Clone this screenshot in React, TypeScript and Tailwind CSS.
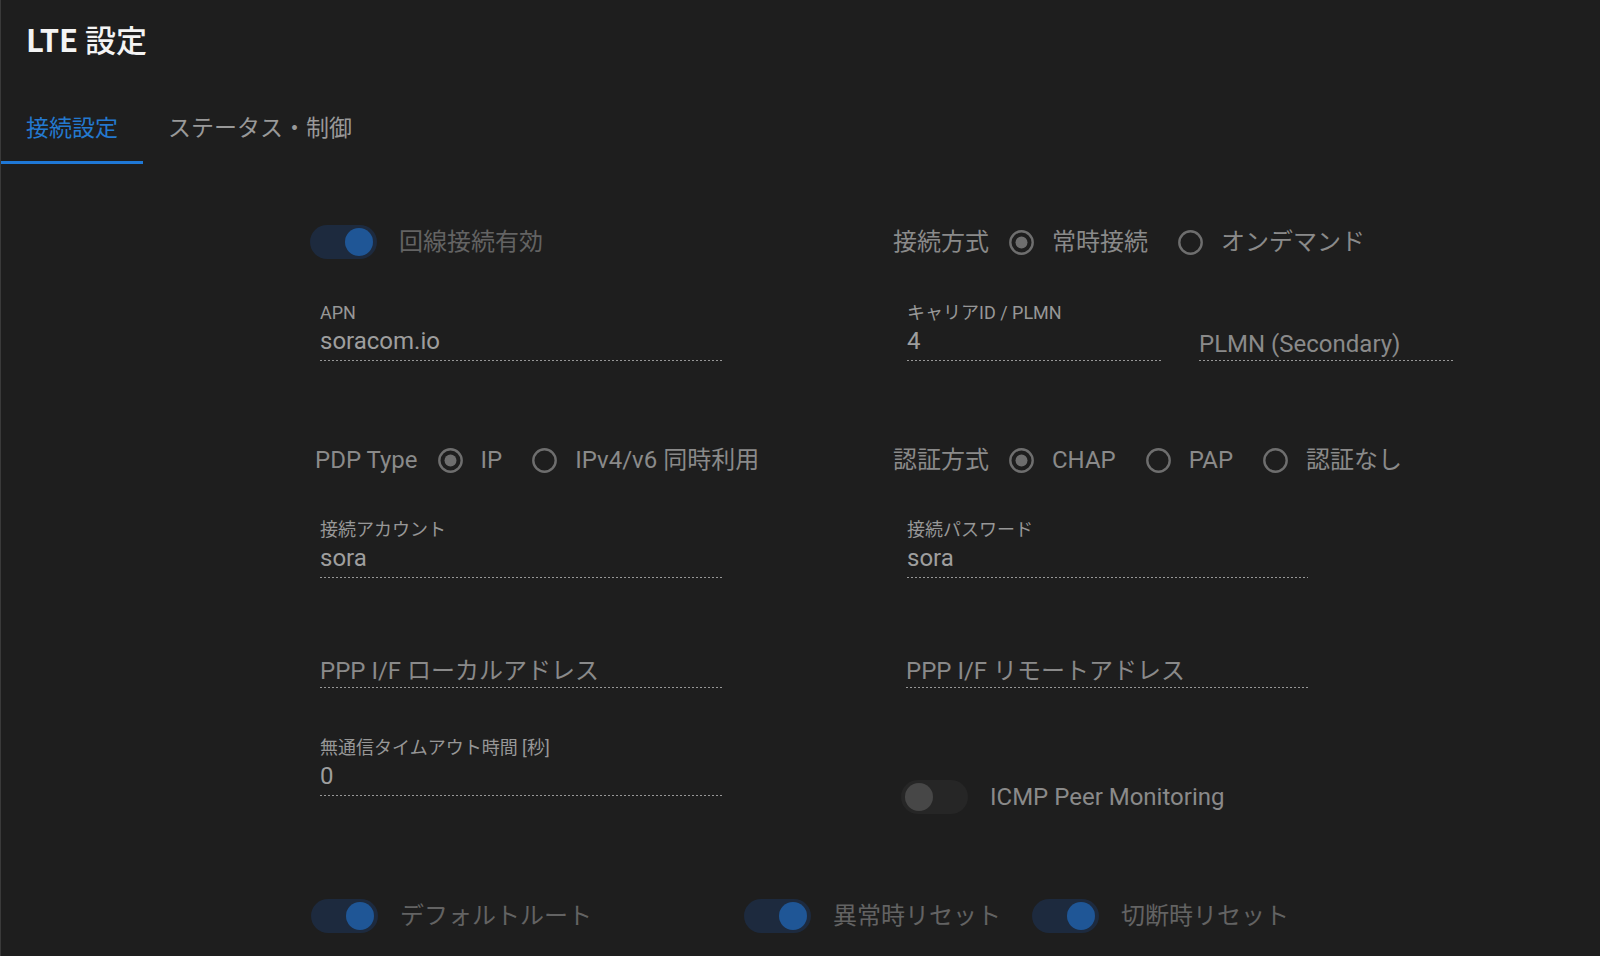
import React from "react";

function Toggle({ on }: { on: boolean }) {
  return (
    <div
      className={
        on
          ? "flex h-[34px] w-[67px] shrink-0 items-center justify-end rounded-full bg-[#1d2a3e] px-[4px]"
          : "flex h-[34px] w-[67px] shrink-0 items-center justify-start rounded-full bg-[#262626] px-[4px]"
      }
    >
      <div
        className={
          on
            ? "h-[28px] w-[28px] rounded-full bg-[#1f5696]"
            : "h-[28px] w-[28px] rounded-full bg-[#474747]"
        }
      />
    </div>
  );
}

function Radio({ checked }: { checked: boolean }) {
  return (
    <svg width="25" height="25" viewBox="0 0 25 25" className="shrink-0">
      <circle cx="12.5" cy="12.5" r="11.2" fill="none" stroke="#6e6e6e" strokeWidth="2.4" />
      {checked && <circle cx="12.5" cy="12.5" r="6" fill="#6e6e6e" />}
    </svg>
  );
}

function RadioGroup({
  label,
  options,
  selected,
}: {
  label: string;
  options: string[];
  selected: number;
}) {
  return (
    <div className="flex h-[42px] items-center text-[24px] leading-[30px] text-[#8a8a8a]">
      <span className="whitespace-nowrap">{label}</span>
      {options.map((o, i) => (
        <div
          key={o}
          className={
            i === 0
              ? "ml-[20px] flex items-center gap-[18px]"
              : "ml-[30px] flex items-center gap-[18px]"
          }
        >
          <Radio checked={i === selected} />
          <span className="whitespace-nowrap">{o}</span>
        </div>
      ))}
    </div>
  );
}

function Dotted() {
  return (
    <div className="h-px w-full bg-[repeating-linear-gradient(90deg,#979797_0px,#979797_2px,transparent_2px,transparent_4px)]" />
  );
}

function Field({
  label,
  value,
  placeholder,
  className,
}: {
  label?: string;
  value?: string;
  placeholder?: string;
  className: string;
}) {
  return (
    <div className={className}>
      <div className="h-[22px] whitespace-nowrap text-[18px] leading-[22px] text-[#979797]">
        {label ?? ""}
      </div>
      {placeholder ? (
        <>
          <div className="mt-[6px] h-[28px] whitespace-nowrap text-[24px] leading-[28px] text-[#8a8a8a]">
            {placeholder}
          </div>
          <div className="mt-[2px]">
            <Dotted />
          </div>
        </>
      ) : (
        <>
          <div className="mt-[3px] h-[28px] whitespace-nowrap text-[24px] leading-[28px] text-[#9e9e9e]">
            {value}
          </div>
          <div className="mt-[5px]">
            <Dotted />
          </div>
        </>
      )}
    </div>
  );
}

function ToggleLabel({ on, label, color }: { on: boolean; label: string; color: string }) {
  return (
    <div className="flex items-center gap-[22px]">
      <Toggle on={on} />
      <span className={color + " whitespace-nowrap text-[24px] leading-[30px]"}>{label}</span>
    </div>
  );
}

export default function App() {
  return (
    <div className="h-[956px] w-full overflow-hidden border-l border-[#3a3a3a] bg-[#1e1e1e] font-['Roboto','Noto_Sans_CJK_JP',sans-serif]">
      {/* Title */}
      <div className="pl-[25px] pt-[21px] font-['Noto_Sans_CJK_JP',sans-serif] text-[31px] leading-[36px] text-[#f4f4f4]">
        <span className="font-bold">LTE</span> <span className="font-medium">設定</span>
      </div>

      {/* Tabs */}
      <div className="mt-[34px] flex">
        <div className="relative flex h-[73px] w-[142px] items-center justify-center pt-[3px] text-[23px] leading-[30px] text-[#2479cf]">
          接続設定
          <div className="absolute bottom-0 left-0 right-0 h-[3px] bg-[#1f78d6]" />
        </div>
        <div className="flex h-[73px] items-center pl-[25px] pt-[3px] text-[23px] leading-[30px] text-[#999999]">
          ステータス・制御
        </div>
      </div>

      {/* Form */}
      <div className="pl-[309px]">
        {/* Row A */}
        <div className="mt-[57px] grid grid-cols-[583px_1fr] items-center">
          <div className="flex h-[42px] items-center">
            <ToggleLabel on={true} label="回線接続有効" color="text-[#636363]" />
          </div>
          <RadioGroup label="接続方式" options={["常時接続", "オンデマンド"]} selected={0} />
        </div>

        {/* Row B */}
        <div className="mt-[39px] grid grid-cols-[583px_1fr]">
          <Field className="ml-[10px] w-[403px]" label="APN" value="soracom.io" />
          <div className="ml-[14px] flex gap-[37px]">
            <Field className="w-[255px]" label="キャリアID / PLMN" value="4" />
            <Field className="w-[255px]" placeholder="PLMN (Secondary)" />
          </div>
        </div>

        {/* Row C */}
        <div className="mt-[78px] grid grid-cols-[583px_1fr] items-center">
          <div className="ml-[5px]">
            <RadioGroup label="PDP Type" options={["IP", "IPv4/v6 同時利用"]} selected={0} />
          </div>
          <RadioGroup label="認証方式" options={["CHAP", "PAP", "認証なし"]} selected={0} />
        </div>

        {/* Row D */}
        <div className="mt-[38px] grid grid-cols-[583px_1fr]">
          <Field className="ml-[10px] w-[403px]" label="接続アカウント" value="sora" />
          <Field className="ml-[14px] w-[401px]" label="接続パスワード" value="sora" />
        </div>

        {/* Row E */}
        <div className="mt-[51px] grid grid-cols-[583px_1fr]">
          <Field className="ml-[10px] w-[403px]" placeholder="PPP I/F ローカルアドレス" />
          <Field className="ml-[13px] w-[402px]" placeholder="PPP I/F リモートアドレス" />
        </div>

        {/* Row F */}
        <div className="mt-[49px] grid grid-cols-[583px_1fr] items-start">
          <Field className="ml-[10px] w-[403px]" label="無通信タイムアウト時間 [秒]" value="0" />
          <div className="ml-[8px] mt-[43px]">
            <ToggleLabel on={false} label="ICMP Peer Monitoring" color="text-[#8a8a8a]" />
          </div>
        </div>

        {/* Row G */}
        <div className="mt-[85px] flex items-center">
          <div className="w-[434px] pl-[1px]">
            <ToggleLabel on={true} label="デフォルトルート" color="text-[#636363]" />
          </div>
          <ToggleLabel on={true} label="異常時リセット" color="text-[#636363]" />
          <div className="ml-[31px]">
            <ToggleLabel on={true} label="切断時リセット" color="text-[#636363]" />
          </div>
        </div>
      </div>
    </div>
  );
}
